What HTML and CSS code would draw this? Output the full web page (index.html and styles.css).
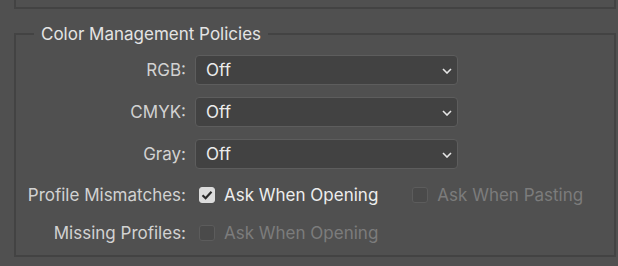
FILE: index.html
```html
<!DOCTYPE html>
<html lang="en">
<head>
    <meta charset="UTF-8">
    <meta name="viewport" content="width=device-width, initial-scale=1.0">
    <title>Color Settings</title>
    <link rel="stylesheet" href="styles.css">
</head>
<body>
    <!-- previous group, cut off at the top -->
    <div class="group-prev"></div>

    <fieldset class="group">
        <legend>Color Management Policies</legend>

        <div class="form-grid">
            <div class="label">RGB:</div>
            <div class="select"><span>Off</span><svg class="chevron" width="10" height="6" viewBox="0 0 10 6"><path d="M1 1 L5 5 L9 1" fill="none" stroke="#e6e6e6" stroke-width="1.6"/></svg></div>

            <div class="label">CMYK:</div>
            <div class="select"><span>Off</span><svg class="chevron" width="10" height="6" viewBox="0 0 10 6"><path d="M1 1 L5 5 L9 1" fill="none" stroke="#e6e6e6" stroke-width="1.6"/></svg></div>

            <div class="label">Gray:</div>
            <div class="select"><span>Off</span><svg class="chevron" width="10" height="6" viewBox="0 0 10 6"><path d="M1 1 L5 5 L9 1" fill="none" stroke="#e6e6e6" stroke-width="1.6"/></svg></div>

            <div class="label check-label">Profile Mismatches:</div>
            <div class="check-row">
                <label class="check">
                    <span class="box checked"><svg width="12" height="10" viewBox="0 0 12 10"><path d="M1.5 5.2 L4.6 8.2 L10.5 1.8" fill="none" stroke="#2a2a2a" stroke-width="2.2"/></svg></span>
                    <span class="check-text">Ask When Opening</span>
                </label>
                <label class="check disabled">
                    <span class="box"></span>
                    <span class="check-text">Ask When Pasting</span>
                </label>
            </div>

            <div class="label check-label missing">Missing Profiles:</div>
            <div class="check-row missing">
                <label class="check disabled">
                    <span class="box"></span>
                    <span class="check-text">Ask When Opening</span>
                </label>
            </div>
        </div>
    </fieldset>
</body>
</html>
```

FILE: styles.css
```css
body {
    margin: 0;
    background-color: #505050;
    font-family: Inter, "Liberation Sans", sans-serif;
    font-size: 17px;
    color: #d2d2d2;
}
.group-prev {
    margin: 0 2px 0 14px;
    height: 7px;
    border: 2px solid #434343;
    border-top: none;
}
.group {
    margin: 15px 2px 0 14px;
    padding: 11px 0 12px;
    border: 2px solid #434343;
}
.group legend {
    margin-left: 18px;
    padding: 0 7px;
    color: #e4e4e4;
}
.form-grid {
    display: grid;
    grid-template-columns: 170px 263px;
    column-gap: 9px;
    row-gap: 12px;
    align-items: center;
}
.label {
    text-align: right;
}
.select {
    height: 28px;
    display: flex;
    align-items: center;
    justify-content: space-between;
    padding: 2px 5px 0 10px;
    box-sizing: border-box;
    height: 30px;
    background-color: #424242;
    border: 1px solid #5d5d5d;
    border-radius: 4px;
    color: #ececec;
}
.select span {
    margin-top: -2px;
}
.chevron {
    display: block;
}
.check-label {
    margin-top: 4px;
}
.check-label.missing,
.check-row.missing {
    margin-top: 6px;
}
.check-row {
    display: flex;
    gap: 34px;
    margin-top: 4px;
    margin-left: 4px;
}
.check {
    display: flex;
    align-items: center;
    gap: 9px;
    white-space: nowrap;
}
.box {
    width: 16px;
    height: 16px;
    box-sizing: border-box;
    border-radius: 3px;
    border: 1px solid #5c5c5c;
    background-color: #4a4a4a;
    display: flex;
    align-items: center;
    justify-content: center;
}
.box.checked {
    background-color: #dcdcdc;
    border-color: #dcdcdc;
}
.check-text {
    color: #ededed;
}
.check.disabled .check-text {
    color: #7c7c7c;
}
```
